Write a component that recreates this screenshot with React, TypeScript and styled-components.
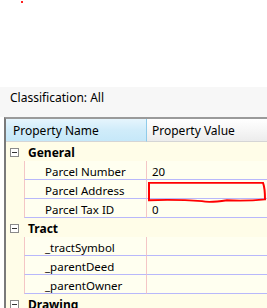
import React from 'react';
import styled, { createGlobalStyle } from 'styled-components';

interface Item {
  name: string;
  value?: string;
  marked?: boolean;
}

interface Category {
  title: string;
  items: Item[];
}

const categories: Category[] = [
  {
    title: 'General',
    items: [
      { name: 'Parcel Number', value: '20' },
      { name: 'Parcel Address', value: '', marked: true },
      { name: 'Parcel Tax ID', value: '0' },
    ],
  },
  {
    title: 'Tract',
    items: [{ name: '_tractSymbol' }, { name: '_parentDeed' }, { name: '_parentOwner' }],
  },
  { title: 'Drawing', items: [] },
];

const GlobalStyle = createGlobalStyle`
  html, body {
    margin: 0;
    padding: 0;
    background: #ffffff;
    overflow: hidden;
  }
  body {
    font-family: "Noto Sans", "Open Sans", sans-serif;
    font-size: 11.5px;
    color: #000;
  }
`;

const App = () => {
  return (
    <Page>
      <GlobalStyle />
      <Canvas>
        <Dot />
      </Canvas>
      <Toolbar>Classification: All</Toolbar>
      <Grid>
        <HeaderName>Property Name</HeaderName>
        <HeaderValue>Property Value</HeaderValue>
        {categories.map((cat) => (
          <React.Fragment key={cat.title}>
            <Gutter>
              <Toggle />
            </Gutter>
            <CategoryCell>{cat.title}</CategoryCell>
            {cat.items.map((item) => (
              <React.Fragment key={item.name}>
                <Gutter />
                <NameCell>{item.name}</NameCell>
                <ValueCell>
                  {item.value}
                  {item.marked && (
                    <Mark viewBox="0 0 120 24" preserveAspectRatio="none">
                      <path
                        d="M2 2 L116 2 Q118 8 118 20 Q100 22 80 21 Q62 24 55 22 Q30 20 2 21 Z"
                        fill="none"
                        stroke="#ff0000"
                        strokeWidth="2"
                      />
                    </Mark>
                  )}
                </ValueCell>
              </React.Fragment>
            ))}
          </React.Fragment>
        ))}
      </Grid>
    </Page>
  );
};

const Page = styled.div`
  width: 267px;
  height: 308px;
  display: flex;
  flex-direction: column;
  overflow: hidden;
`;

const Canvas = styled.div`
  flex-shrink: 0;
  height: 87px;
  position: relative;
  background: #ffffff;
`;

const Dot = styled.span`
  position: absolute;
  left: 21px;
  top: 1px;
  width: 2px;
  height: 2px;
  background: #ff2020;
`;

const Toolbar = styled.div`
  flex-shrink: 0;
  height: 30px;
  background: #f7f7f7;
  padding: 4px 0 0 10px;
  box-sizing: border-box;
  line-height: 14px;
  font-size: 12px;
`;

const Grid = styled.div`
  display: grid;
  grid-template-columns: 18px 123px 1fr;
  grid-template-rows: 23px;
  grid-auto-rows: 19px;
  margin-left: 4px;
  border-left: 2px solid #7a7a7a;
  border-top: 2px solid #9a9a9a;
  flex-shrink: 0;
  background: #fffff0;
  align-content: start;
`;

const HeaderName = styled.div`
  grid-column: 1 / 3;
  background: linear-gradient(#e6f5fd, #d0ecfa 50%, #c6e8f9);
  border-right: 1px solid #8fcbea;
  border-bottom: 1px solid #d5d5d5;
  padding: 1px 0 0 7px;
  line-height: 21px;
  font-size: 12px;
`;

const HeaderValue = styled.div`
  background: linear-gradient(#ffffff, #f6f6f6 50%, #ececec);
  border-bottom: 1px solid #d5d5d5;
  padding: 1px 0 0 5px;
  line-height: 21px;
  font-size: 12px;
`;

const Gutter = styled.div`
  background: #fffde8;
  display: flex;
  align-items: center;
  padding: 1px 0 0 4px;
`;

const Toggle = styled.span`
  position: relative;
  width: 9px;
  height: 9px;
  border: 1px solid #8a8a8a;
  box-sizing: border-box;
  background: #fff;

  &::after {
    content: '';
    position: absolute;
    left: 1px;
    right: 1px;
    top: 3px;
    height: 1px;
    background: #333;
  }
`;

const CategoryCell = styled.div`
  grid-column: 2 / 4;
  background: #fffde8;
  font-weight: bold;
  font-size: 12px;
  padding: 2px 0 0 4px;
  line-height: 18px;
`;

const NameCell = styled.div`
  border-left: 1px solid #f4c6c6;
  border-right: 1px solid #f4c6c6;
  border-bottom: 1px solid #b8b8fb;
  padding: 2px 0 0 20px;
  line-height: 17px;
  background: #fffff0;
`;

const ValueCell = styled.div`
  position: relative;
  border-bottom: 1px solid #b8b8fb;
  padding: 2px 0 0 5px;
  line-height: 17px;
  background: #fffff0;
`;

const Mark = styled.svg`
  position: absolute;
  z-index: 1;
  left: 0;
  top: 1px;
  width: 120px;
  height: 22px;
  overflow: visible;
`;

export default App;
